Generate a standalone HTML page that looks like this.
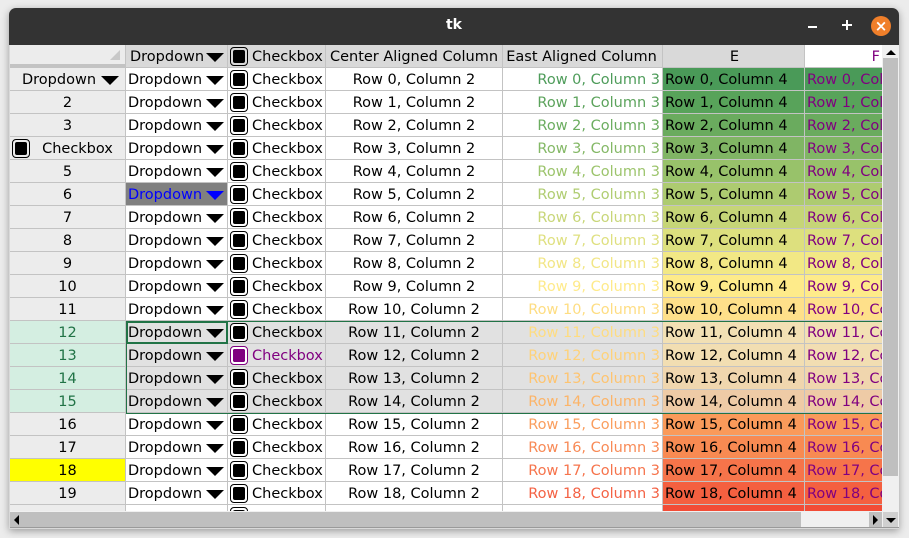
<!DOCTYPE html>
<html><head><meta charset="utf-8"><style>
*{margin:0;padding:0;box-sizing:border-box}
body{width:909px;height:538px;background:#ececec;font-family:"DejaVu Sans","Liberation Sans",sans-serif;font-size:14.5px;position:relative;overflow:hidden}
.win{position:absolute;left:9px;top:8px;width:890px;height:521px;background:#d9d9d9;border-radius:7px 7px 0 0;box-shadow:0 2px 8px rgba(0,0,0,.35);overflow:hidden}
.tb{position:absolute;left:0;top:0;width:890px;height:37px;background:#333}
.tb .t{position:absolute;left:0;width:890px;top:9px;text-align:center;color:#fff;font-weight:bold;font-size:14px}
.row{position:absolute;left:10px;height:23px;width:872px;display:flex;white-space:nowrap}
.c{height:23px;border-right:1px solid #c3c3c3;border-bottom:1px solid #c3c3c3;overflow:hidden;line-height:25px;position:relative;background:#fff;color:#000}
.i{width:116px;background:#ececec;text-align:center}
.d{width:102px;padding-left:2px}
.k{width:98px;padding-left:24px}
.m{width:177px;text-align:center}
.e{width:160px;text-align:right;padding-right:2px}
.E{width:142px;padding-left:2px}
.F{width:77px;padding-left:2px;color:#800080;border-right:none}
.tri{position:absolute;right:3px;top:8px;width:0;height:0;border-left:9px solid transparent;border-right:9px solid transparent;border-top:9px solid #000}
.cb{position:absolute;left:2px;top:2px;width:18px;height:19px;border:1px solid #000;border-radius:4px;background:#fff}
.cb::after{content:"";position:absolute;left:2px;top:2px;width:12px;height:13px;background:#000;border-radius:2px}
.sel .c{background:#e1e1e1}
.sel .i{background:#d4eee1;color:#217346}
.hd .c{background:#d9d9d9}
</style></head><body>
<div class="win">
<div class="tb"><div class="t">tk</div>
<div style="position:absolute;left:799px;top:18px;width:9px;height:2px;background:#fff"></div>
<div style="position:absolute;left:833px;top:16px;width:10px;height:2px;background:#fff"></div>
<div style="position:absolute;left:837px;top:12px;width:2px;height:10px;background:#fff"></div>
<div style="position:absolute;left:862px;top:8px;width:20px;height:20px;border-radius:50%;background:#f07f2a;color:#fff;font-weight:bold;text-align:center;line-height:20px;font-size:15px">×</div>
</div>
</div>

<div class="row hd" style="top:45px">
<div class="c i" style="background:#ececec;border-bottom:4px solid #c3c3c3"><div style="position:absolute;right:5px;top:5px;width:0;height:0;border-left:10px solid transparent;border-bottom:10px solid #c8c8c8"></div></div>
<div class="c d" style="padding-left:4px">Dropdown<div class="tri"></div></div>
<div class="c k"><div class="cb" style="background:#d9d9d9"></div>Checkbox</div>
<div class="c m">Center Aligned Column</div>
<div class="c e" style="text-align:center">East Aligned Column</div>
<div class="c E" style="text-align:center">E</div>
<div class="c F" style="background:#fff;text-align:right;padding-right:2px">F</div>
</div>

<div class="row" style="top:68px"><div class="c i" style="text-align:left;padding-left:12px">Dropdown<div class="tri" style="right:6px"></div></div><div class="c d">Dropdown<div class="tri"></div></div><div class="c k"><div class="cb"></div>Checkbox</div><div class="c m">Row 0, Column 2</div><div class="c e" style="color:#4e9c5a">Row 0, Column 3</div><div class="c E" style="background:#4a9a58">Row 0, Column 4</div><div class="c F" style="background:#4a9a58">Row 0, Column 5</div></div>
<div class="row" style="top:91px"><div class="c i">2</div><div class="c d">Dropdown<div class="tri"></div></div><div class="c k"><div class="cb"></div>Checkbox</div><div class="c m">Row 1, Column 2</div><div class="c e" style="color:#5ca35c">Row 1, Column 3</div><div class="c E" style="background:#58a35a">Row 1, Column 4</div><div class="c F" style="background:#58a35a">Row 1, Column 5</div></div>
<div class="row" style="top:114px"><div class="c i">3</div><div class="c d">Dropdown<div class="tri"></div></div><div class="c k"><div class="cb"></div>Checkbox</div><div class="c m">Row 2, Column 2</div><div class="c e" style="color:#6cad60">Row 2, Column 3</div><div class="c E" style="background:#6aab5e">Row 2, Column 4</div><div class="c F" style="background:#6aab5e">Row 2, Column 5</div></div>
<div class="row" style="top:137px"><div class="c i" style="padding-left:20px"><div class="cb" style="background:#ececec"></div>Checkbox</div><div class="c d">Dropdown<div class="tri"></div></div><div class="c k"><div class="cb"></div>Checkbox</div><div class="c m">Row 3, Column 2</div><div class="c e" style="color:#84b866">Row 3, Column 3</div><div class="c E" style="background:#80b564">Row 3, Column 4</div><div class="c F" style="background:#80b564">Row 3, Column 5</div></div>
<div class="row" style="top:160px"><div class="c i">5</div><div class="c d">Dropdown<div class="tri"></div></div><div class="c k"><div class="cb"></div>Checkbox</div><div class="c m">Row 4, Column 2</div><div class="c e" style="color:#9cc46c">Row 4, Column 3</div><div class="c E" style="background:#98c26a">Row 4, Column 4</div><div class="c F" style="background:#98c26a">Row 4, Column 5</div></div>
<div class="row" style="top:183px"><div class="c i">6</div><div class="c d" style="background:#808080;color:#0000ff">Dropdown<div class="tri" style="border-top-color:#0000ff"></div></div><div class="c k"><div class="cb"></div>Checkbox</div><div class="c m">Row 5, Column 2</div><div class="c e" style="color:#b0cd72">Row 5, Column 3</div><div class="c E" style="background:#adcb70">Row 5, Column 4</div><div class="c F" style="background:#adcb70">Row 5, Column 5</div></div>
<div class="row" style="top:206px"><div class="c i">7</div><div class="c d">Dropdown<div class="tri"></div></div><div class="c k"><div class="cb"></div>Checkbox</div><div class="c m">Row 6, Column 2</div><div class="c e" style="color:#c8d679">Row 6, Column 3</div><div class="c E" style="background:#c6d577">Row 6, Column 4</div><div class="c F" style="background:#c6d577">Row 6, Column 5</div></div>
<div class="row" style="top:229px"><div class="c i">8</div><div class="c d">Dropdown<div class="tri"></div></div><div class="c k"><div class="cb"></div>Checkbox</div><div class="c m">Row 7, Column 2</div><div class="c e" style="color:#dfe080">Row 7, Column 3</div><div class="c E" style="background:#dde07e">Row 7, Column 4</div><div class="c F" style="background:#dde07e">Row 7, Column 5</div></div>
<div class="row" style="top:252px"><div class="c i">9</div><div class="c d">Dropdown<div class="tri"></div></div><div class="c k"><div class="cb"></div>Checkbox</div><div class="c m">Row 8, Column 2</div><div class="c e" style="color:#f2e686">Row 8, Column 3</div><div class="c E" style="background:#f2e885">Row 8, Column 4</div><div class="c F" style="background:#f2e885">Row 8, Column 5</div></div>
<div class="row" style="top:275px"><div class="c i">10</div><div class="c d">Dropdown<div class="tri"></div></div><div class="c k"><div class="cb"></div>Checkbox</div><div class="c m">Row 9, Column 2</div><div class="c e" style="color:#feea8a">Row 9, Column 3</div><div class="c E" style="background:#feeb8a">Row 9, Column 4</div><div class="c F" style="background:#feeb8a">Row 9, Column 5</div></div>
<div class="row" style="top:298px"><div class="c i">11</div><div class="c d">Dropdown<div class="tri"></div></div><div class="c k"><div class="cb"></div>Checkbox</div><div class="c m">Row 10, Column 2</div><div class="c e" style="color:#fedd82">Row 10, Column 3</div><div class="c E" style="background:#fee08a">Row 10, Column 4</div><div class="c F" style="background:#fee08a">Row 10, Column 5</div></div>
<div class="row sel" style="top:321px"><div class="c i">12</div><div class="c d">Dropdown<div class="tri"></div></div><div class="c k"><div class="cb"></div>Checkbox</div><div class="c m">Row 11, Column 2</div><div class="c e" style="color:#fedc80">Row 11, Column 3</div><div class="c E" style="background:#f2e0b4">Row 11, Column 4</div><div class="c F" style="background:#f2e0b4">Row 11, Column 5</div></div>
<div class="row sel" style="top:344px"><div class="c i">13</div><div class="c d">Dropdown<div class="tri"></div></div><div class="c k" style="color:#800080"><div class="cb" style="border-color:#800080"></div><div style="position:absolute;left:5px;top:5px;width:12px;height:13px;background:#800080;border-radius:2px"></div>Checkbox</div><div class="c m">Row 12, Column 2</div><div class="c e" style="color:#fed27a">Row 12, Column 3</div><div class="c E" style="background:#f2deb2">Row 12, Column 4</div><div class="c F" style="background:#f2deb2">Row 12, Column 5</div></div>
<div class="row sel" style="top:367px"><div class="c i">14</div><div class="c d">Dropdown<div class="tri"></div></div><div class="c k"><div class="cb"></div>Checkbox</div><div class="c m">Row 13, Column 2</div><div class="c e" style="color:#fec470">Row 13, Column 3</div><div class="c E" style="background:#f0d6ae">Row 13, Column 4</div><div class="c F" style="background:#f0d6ae">Row 13, Column 5</div></div>
<div class="row sel" style="top:390px"><div class="c i">15</div><div class="c d">Dropdown<div class="tri"></div></div><div class="c k"><div class="cb"></div>Checkbox</div><div class="c m">Row 14, Column 2</div><div class="c e" style="color:#fcb468">Row 14, Column 3</div><div class="c E" style="background:#eecba6">Row 14, Column 4</div><div class="c F" style="background:#eecba6">Row 14, Column 5</div></div>
<div class="row" style="top:413px"><div class="c i">16</div><div class="c d">Dropdown<div class="tri"></div></div><div class="c k"><div class="cb"></div>Checkbox</div><div class="c m">Row 15, Column 2</div><div class="c e" style="color:#fa9e5e">Row 15, Column 3</div><div class="c E" style="background:#fa9a5a">Row 15, Column 4</div><div class="c F" style="background:#fa9a5a">Row 15, Column 5</div></div>
<div class="row" style="top:436px"><div class="c i">17</div><div class="c d">Dropdown<div class="tri"></div></div><div class="c k"><div class="cb"></div>Checkbox</div><div class="c m">Row 16, Column 2</div><div class="c e" style="color:#f88a56">Row 16, Column 3</div><div class="c E" style="background:#f88a52">Row 16, Column 4</div><div class="c F" style="background:#f88a52">Row 16, Column 5</div></div>
<div class="row" style="top:459px"><div class="c i" style="background:#ffff00">18</div><div class="c d">Dropdown<div class="tri"></div></div><div class="c k"><div class="cb"></div>Checkbox</div><div class="c m">Row 17, Column 2</div><div class="c e" style="color:#f6744c">Row 17, Column 3</div><div class="c E" style="background:#f6744a">Row 17, Column 4</div><div class="c F" style="background:#f6744a">Row 17, Column 5</div></div>
<div class="row" style="top:482px"><div class="c i">19</div><div class="c d">Dropdown<div class="tri"></div></div><div class="c k"><div class="cb"></div>Checkbox</div><div class="c m">Row 18, Column 2</div><div class="c e" style="color:#f46244">Row 18, Column 3</div><div class="c E" style="background:#f46040">Row 18, Column 4</div><div class="c F" style="background:#f46040">Row 18, Column 5</div></div>
<div class="row" style="top:505px;height:6px;overflow:hidden"><div class="c i"></div><div class="c d"></div><div class="c k"><div class="cb"></div></div><div class="c m"></div><div class="c e"></div><div class="c E" style="background:#f24c36"></div><div class="c F" style="background:#f24c36"></div></div>

<div style="position:absolute;left:126px;top:321px;width:756px;height:93px;border:1px solid #217346;border-right:none"></div>
<div style="position:absolute;left:126px;top:321px;width:102px;height:23px;border:2px solid #217346"></div>

<div style="position:absolute;left:882px;top:45px;width:17px;height:466px;background:#f0f0f0"></div>
<div style="position:absolute;left:883px;top:58px;width:15px;height:418px;background:#bfbfbf"></div>
<div style="position:absolute;left:886px;top:50px;width:0;height:0;border-left:5px solid transparent;border-right:5px solid transparent;border-bottom:5px solid #000"></div>
<div style="position:absolute;left:10px;top:511px;width:889px;height:17px;background:#f0f0f0;border-bottom:1px solid #9a9a9a"></div>
<div style="position:absolute;left:10px;top:512px;width:791px;height:15px;background:#bfbfbf"></div>
<div style="position:absolute;left:14px;top:515px;width:0;height:0;border-top:5px solid transparent;border-bottom:5px solid transparent;border-right:5px solid #000"></div>
<div style="position:absolute;left:869px;top:512px;width:13px;height:15px;background:#bfbfbf"></div>
<div style="position:absolute;left:873px;top:515px;width:0;height:0;border-top:5px solid transparent;border-bottom:5px solid transparent;border-left:5px solid #000"></div>
<div style="position:absolute;left:883px;top:512px;width:15px;height:15px;background:#d0d0d0"></div>
<div style="position:absolute;left:886px;top:518px;width:0;height:0;border-left:5px solid transparent;border-right:5px solid transparent;border-top:5px solid #000"></div>
</body></html>
